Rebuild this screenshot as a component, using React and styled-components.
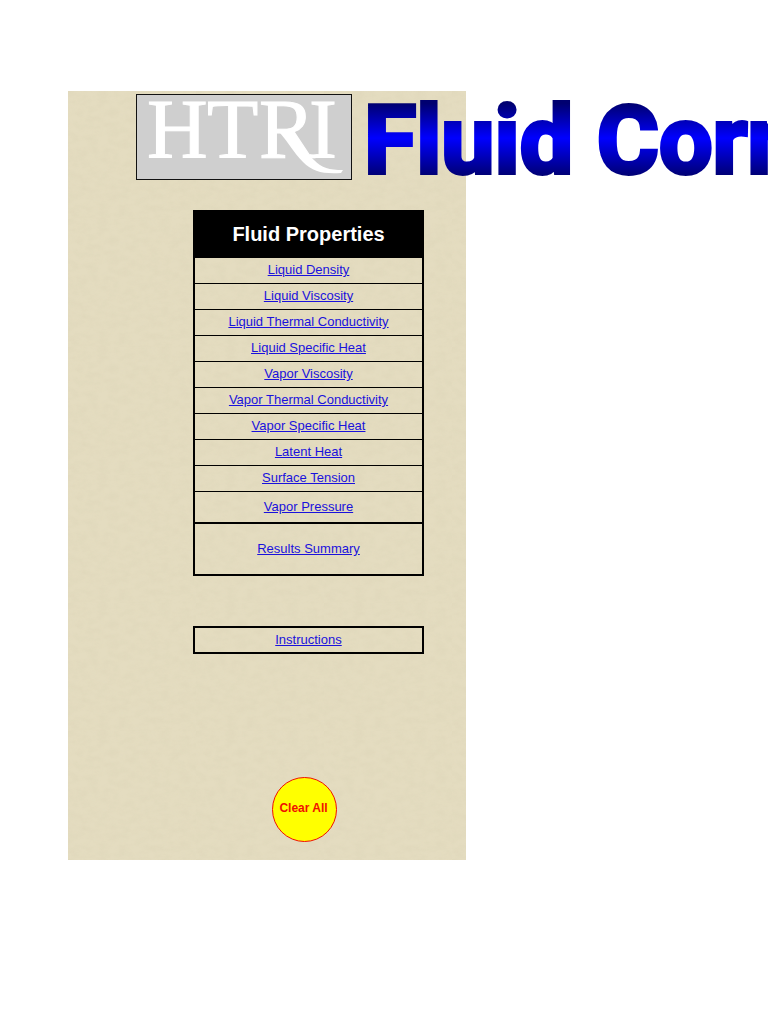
import React from "react";
import styled, { createGlobalStyle } from "styled-components";

const grain = `url("data:image/svg+xml,${encodeURIComponent(
  `<svg xmlns="http://www.w3.org/2000/svg" width="128" height="128"><filter id="g"><feTurbulence type="fractalNoise" baseFrequency="0.1 0.16" numOctaves="3" seed="4" stitchTiles="stitch"/><feColorMatrix values="0 0 0 0 0.5  0 0 0 0 0.46  0 0 0 0 0.3  0.16 0 0 0 -0.05"/></filter><rect width="128" height="128" filter="url(#g)"/></svg>`
)}")`;

const GlobalStyle = createGlobalStyle`
  *, *::before, *::after { box-sizing: border-box; }
  body {
    margin: 0;
    background: #fff;
    font-family: "Liberation Sans", Arial, sans-serif;
    overflow-x: hidden;
  }
`;

const Page = styled.main`
  padding: 91px 0 64px 68px;
  overflow: hidden;
`;

const Panel = styled.div`
  display: flex;
  flex-direction: column;
  max-width: 398px;
  padding: 3px 0 18px;
  background: ${grain} #e4dcc0;
`;

const Banner = styled.header`
  display: flex;
  gap: 12px;
  height: 86px;
  margin-left: 68px;
`;

const Logo = styled.svg`
  flex: none;
  width: 216px;
  height: 86px;
  overflow: visible;
  border: 1px solid #111;
  background: #cfcfcf;
`;

const Title = styled.h1`
  flex: none;
  height: 94px;
  margin: 0;
  font: bold 95px/94px Roboto, "Liberation Sans", sans-serif;
  white-space: nowrap;
  color: transparent;
  -webkit-text-stroke: 4px transparent;
  background: linear-gradient(#000070 10%, #0000ff 47%, #000070 88%);
  background-clip: text;
  -webkit-background-clip: text;
`;

const Menu = styled.nav`
  display: flex;
  flex-direction: column;
  gap: 50px;
  width: 231px;
  margin: 30px 42px 0 auto;
`;

const Table = styled.table`
  width: 100%;
  border-collapse: collapse;
  border: 2px solid #000;
`;

const Heading = styled.th`
  height: 46px;
  padding: 0;
  background: #000;
  color: #fff;
  font-size: 20px;
  line-height: 24px;
`;

const Cell = styled.td`
  height: ${(p) => p.$height || 26}px;
  padding: 0;
  border-top: ${(p) => (p.$heavy ? 2 : 1)}px solid #000;
  text-align: center;
  font-size: 13px;
  line-height: 16px;
`;

const Link = styled.a`
  color: #1a12dc;
  text-decoration: underline;
`;

const ClearButton = styled.button`
  width: 65px;
  height: 65px;
  margin: 123px 0 0 204px;
  padding: 0 2px 4px 0;
  border: 1px solid #f01000;
  border-radius: 50%;
  background: #ffff00;
  color: #f01000;
  font: bold 12px/16px "Liberation Sans", Arial, sans-serif;
  white-space: nowrap;
  cursor: pointer;
`;

const rows = [
  { label: "Liquid Density" },
  { label: "Liquid Viscosity" },
  { label: "Liquid Thermal Conductivity" },
  { label: "Liquid Specific Heat" },
  { label: "Vapor Viscosity" },
  { label: "Vapor Thermal Conductivity" },
  { label: "Vapor Specific Heat" },
  { label: "Latent Heat" },
  { label: "Surface Tension" },
  { label: "Vapor Pressure", height: 32 },
  { label: "Results Summary", height: 52, heavy: true },
];

export default function App() {
  return (
    <>
      <GlobalStyle />
      <Page>
        <Panel>
          <Banner>
            <Logo viewBox="0 0 214 84" role="img" aria-label="HTRI">
              <text
                x="10 70 122 172"
                y="63"
                fill="#fff"
                stroke="#fff"
                strokeWidth="1"
                fontFamily="'Liberation Serif', serif"
                fontSize="84"
              >
                HTRI
              </text>
              <path
                d="M143 38 L156 38 C163 49 169 58 177 65 C185 73 192 75 206 75 L204 78 C186 79 176 77 166 67 C157 58 151 47 143 38Z"
                fill="#fff"
              />
            </Logo>
            <Title>Fluid Corr</Title>
          </Banner>
          <Menu aria-label="Fluid properties">
            <Table>
              <thead>
                <tr>
                  <Heading scope="col">Fluid Properties</Heading>
                </tr>
              </thead>
              <tbody>
                {rows.map((row) => (
                  <tr key={row.label}>
                    <Cell $height={row.height} $heavy={row.heavy}>
                      <Link href="#">{row.label}</Link>
                    </Cell>
                  </tr>
                ))}
              </tbody>
            </Table>
            <Table>
              <tbody>
                <tr>
                  <Cell $heavy>
                    <Link href="#">Instructions</Link>
                  </Cell>
                </tr>
              </tbody>
            </Table>
          </Menu>
          <ClearButton type="button">Clear All</ClearButton>
        </Panel>
      </Page>
    </>
  );
}
